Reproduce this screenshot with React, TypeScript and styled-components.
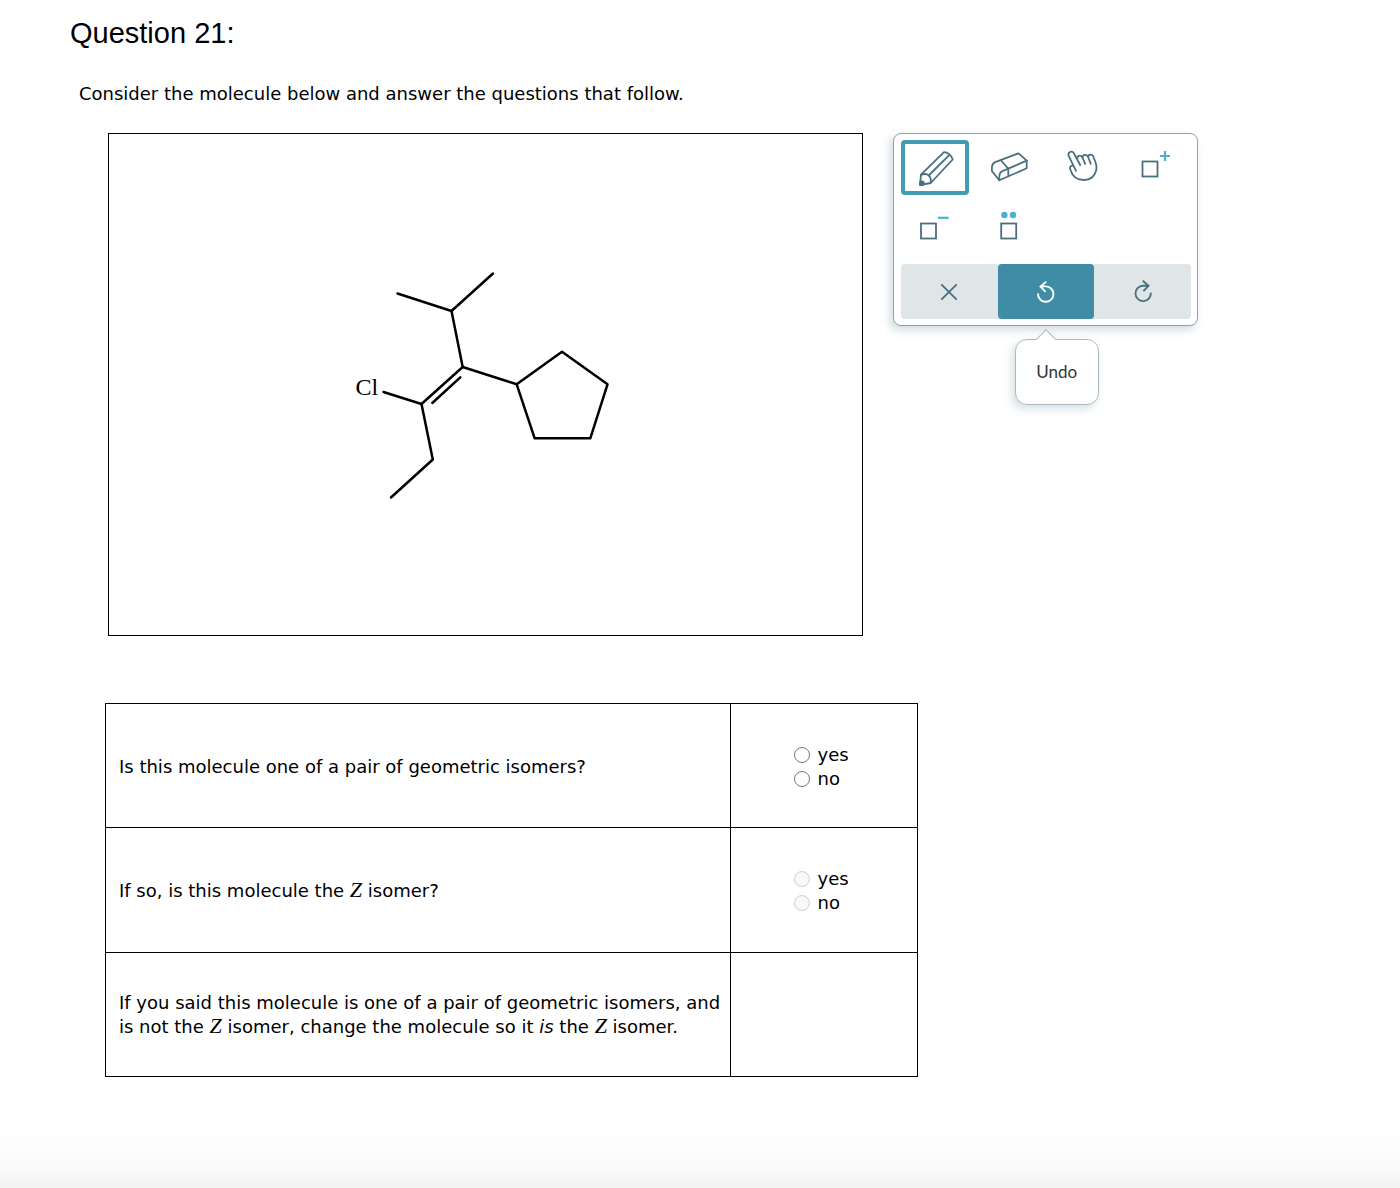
import React, { useState } from "react";
import styled, { createGlobalStyle } from "styled-components";

const ink = "#4a707e";
const accent = "#4fb0cb";

const GlobalStyle = createGlobalStyle`
  *, *::before, *::after { box-sizing: border-box; }
  body {
    margin: 0;
    background: #fff;
    color: #000;
    font-family: Verdana, "DejaVu Sans", sans-serif;
    font-size: 18px;
    line-height: 24px;
  }
`;

const Page = styled.main`
  min-height: 100vh;
  padding: 16px 70px 110px;
  background: linear-gradient(to top, #f3f3f3, #fafafa 20px, #ffffff 60px);
`;

const Title = styled.h1`
  margin: 0;
  font: 400 29px/34px "Liberation Sans", Arial, sans-serif;
`;

const Prompt = styled.p`
  margin: 32px 0 27px 9px;
`;

const Workspace = styled.section`
  display: flex;
  align-items: flex-start;
  gap: 30px;
  margin-left: 38px;
`;

const Canvas = styled.div`
  flex: 0 1 755px;
  border: 1px solid #000;
`;

const Drawing = styled.svg`
  display: block;
  width: 100%;
  height: auto;
`;

const AtomLabel = styled.text`
  font: 24px "Liberation Serif", "Times New Roman", serif;
  fill: #000;
  stroke: none;
`;

const Toolbox = styled.aside`
  flex: 0 0 305px;
  padding: 6px 6px 6px 7px;
  border: 1px solid #8aa3ad;
  border-radius: 8px;
  background: #fff;
  box-shadow: -3px 4px 8px rgba(74, 112, 126, 0.25);
`;

const ToolGrid = styled.div`
  display: grid;
  grid-template-columns: repeat(4, 1fr);
  grid-auto-rows: 55px;
  gap: 6px;
`;

const ToolButton = styled.button<{ $active: boolean }>`
  display: flex;
  align-items: center;
  justify-content: center;
  padding: 0;
  border: 4px solid ${(p) => (p.$active ? "#429bb3" : "transparent")};
  border-radius: 4px;
  background: none;
  cursor: pointer;
`;

const ToolIcon = styled.svg`
  flex: none;
  width: 60px;
  height: 47px;
  fill: none;
  stroke: ${ink};
  stroke-width: 1.8;
  stroke-linejoin: round;
  stroke-linecap: round;
`;

const ActionBar = styled.div`
  display: grid;
  grid-template-columns: repeat(3, 1fr);
  margin-top: 8px;
  border-radius: 4px;
  background: #e0e6e8;
`;

const ActionSlot = styled.div`
  position: relative;
`;

const ActionButton = styled.button<{ $primary?: boolean }>`
  display: flex;
  align-items: center;
  justify-content: center;
  width: 100%;
  height: 55px;
  padding: 0;
  border: 0;
  border-radius: 4px;
  background: ${(p) => (p.$primary ? "#3f8ca6" : "transparent")};
  color: ${(p) => (p.$primary ? "#fff" : ink)};
  cursor: pointer;
`;

const ActionIcon = styled.svg`
  width: 24px;
  height: 24px;
  fill: none;
  stroke: currentColor;
  stroke-width: 1.9;
`;

const Tooltip = styled.div`
  position: absolute;
  top: 75px;
  left: 17px;
  width: 84px;
  padding: 20px 0;
  border: 1px solid #a9bac1;
  border-radius: 12px;
  background: #fff;
  box-shadow: -3px 4px 8px rgba(74, 112, 126, 0.22);
  color: #333;
  font: 17px/24px Lato, sans-serif;
  text-align: center;

  &::before {
    content: "";
    position: absolute;
    top: -8px;
    left: 23px;
    width: 14px;
    height: 14px;
    border: solid #a9bac1;
    border-width: 1px 0 0 1px;
    background: #fff;
    transform: rotate(45deg);
  }
`;

const QuestionTable = styled.table`
  width: 100%;
  max-width: 813px;
  height: 374px;
  margin: 67px 0 0 35px;
  border-collapse: collapse;
`;

const Row = styled.tr`
  height: 124px;
`;

const QuestionCell = styled.th`
  width: 77%;
  padding: 2px 4px 0 13px;
  border: 1px solid #000;
  font-weight: 400;
  text-align: left;
`;

const AnswerCell = styled.td`
  padding: 2px 6px 0 0;
  border: 1px solid #000;
`;

const Choices = styled.div`
  display: flex;
  flex-direction: column;
  width: max-content;
  margin: 0 auto;
`;

const Choice = styled.label`
  display: flex;
  align-items: center;
  gap: 8px;
`;

const Radio = styled.input`
  width: 16px;
  height: 16px;
  margin: 0;
`;

const Symbol = styled.i`
  font: italic 22px/20px "Liberation Serif", "Times New Roman", serif;
`;

function Molecule() {
  return (
    <Drawing viewBox="0 0 753 501" role="img" aria-label="Skeletal structure">
      <g fill="none" stroke="#000" strokeWidth="2.5" strokeLinejoin="round" strokeLinecap="round">
        <path d="M288.5 159.5 342.5 177 384 139.5" />
        <path d="M342.5 177 353.7 233 312.5 270 274.5 258" />
        <path d="M351.3 243.3 323.3 269" />
        <path d="M312.5 270 323.8 325.5 282 363.5" />
        <path d="M353.7 233 407.7 250.3 453 217.7 498.5 250.3 481.3 304.3H425.7L407.7 250.3" />
        <AtomLabel x="246.5" y="261">Cl</AtomLabel>
      </g>
    </Drawing>
  );
}

const tools = [
  {
    name: "Draw",
    art: (
      <>
        <path d="M15 41 16 30.7 39 8.2C42.5 8.2 47 11.5 47.7 15.5L25.7 39Z" />
        <path d="M16 30.7C19.5 29.6 22.3 29.9 23.7 31.5 25.6 33 26.2 36 25.7 39M23.7 31.5 44.2 11.2" />
        <circle cx="16.9" cy="39.2" r="1.9" fill={ink} />
      </>
    ),
  },
  {
    name: "Erase",
    art: (
      <>
        <path d="M12.9 27V23.5C13 21 14.2 19 16.2 18.2L39.7 9.3 47.7 16.7V24.3L20.3 36.3Z" />
        <path d="M20.3 36.3V32.5C20.4 29.5 21.5 27.7 24 26.8L47.7 16.7M22 16.5 29.3 24.7V32" />
      </>
    ),
  },
  {
    name: "Move",
    art: (
      <path d="M23 26.8 15.8 12.2C14.2 8.5 18.7 5.7 21 9.5L27.2 21M24.3 14.5C24.4 11.2 28 10.7 29.5 13.5L32.2 19.8M29.7 13.5C29.8 10.2 33.5 10 35 12.8L37.7 19.8M35.2 13C35.3 10.2 39 9.8 40.2 12.2L42.6 18.5C45.5 27 40.5 36 31 36 23.5 36 19.3 32 17.7 26.5 16.4 23.5 16.5 22 19.8 21.3" />
    ),
  },
  {
    name: "Add positive charge",
    art: (
      <>
        <rect x="15.5" y="17.5" width="15" height="15" strokeLinejoin="miter" />
        <path d="M33 12H43M38 7V17" stroke={accent} strokeWidth="2.2" strokeLinecap="butt" />
      </>
    ),
  },
  {
    name: "Add negative charge",
    art: (
      <>
        <rect x="16" y="18.5" width="15" height="15" strokeLinejoin="miter" />
        <path d="M33 12.8H43.6" stroke={accent} strokeWidth="2.2" strokeLinecap="butt" />
      </>
    ),
  },
  {
    name: "Add lone pair",
    art: (
      <>
        <rect x="22.2" y="18.5" width="15" height="15" strokeLinejoin="miter" />
        <g fill={accent} stroke="none">
          <circle cx="25.4" cy="10" r="3.2" />
          <circle cx="34" cy="10" r="3.2" />
        </g>
      </>
    ),
  },
];

function YesNo({ name, disabled }: { name: string; disabled?: boolean }) {
  return (
    <Choices role="radiogroup">
      {["yes", "no"].map((value) => (
        <Choice key={value}>
          <Radio type="radio" name={name} value={value} disabled={disabled} />
          {value}
        </Choice>
      ))}
    </Choices>
  );
}

export default function App() {
  const [tool, setTool] = useState("Draw");

  return (
    <>
      <GlobalStyle />
      <Page>
        <Title>Question 21:</Title>
        <Prompt>Consider the molecule below and answer the questions that follow.</Prompt>
        <Workspace>
          <Canvas>
            <Molecule />
          </Canvas>
          <Toolbox>
            <ToolGrid>
              {tools.map(({ name, art }) => (
                <ToolButton key={name} type="button" aria-label={name} $active={tool === name} onClick={() => setTool(name)}>
                  <ToolIcon viewBox="0 0 60 47">{art}</ToolIcon>
                </ToolButton>
              ))}
            </ToolGrid>
            <ActionBar>
              <ActionButton type="button" aria-label="Clear">
                <ActionIcon viewBox="0 0 24 24">
                  <path d="M4.3 4.3 19.7 19.7M19.7 4.3 4.3 19.7" />
                </ActionIcon>
              </ActionButton>
              <ActionSlot>
                <ActionButton type="button" aria-labelledby="undo-tip" $primary>
                  <ActionIcon viewBox="0 0 24 24">
                    <path d="M4.1 13.3A7.7 7.7 0 1 0 11.8 6.4H6.7M12.2 1.6 6.5 6.6 11.6 11.8" />
                  </ActionIcon>
                </ActionButton>
                <Tooltip id="undo-tip" role="tooltip">Undo</Tooltip>
              </ActionSlot>
              <ActionButton type="button" aria-label="Redo">
                <ActionIcon viewBox="0 0 24 24">
                  <path d="M19.8 12.6A7.7 7.7 0 1 1 12.1 5.7H17.2M11.8 .8 17.5 5.9 12.4 11.1" />
                </ActionIcon>
              </ActionButton>
            </ActionBar>
          </Toolbox>
        </Workspace>
        <QuestionTable>
          <tbody>
            <Row>
              <QuestionCell scope="row">Is this molecule one of a pair of geometric isomers?</QuestionCell>
              <AnswerCell>
                <YesNo name="geometric" />
              </AnswerCell>
            </Row>
            <Row>
              <QuestionCell scope="row">
                If so, is this molecule the <Symbol>Z</Symbol> isomer?
              </QuestionCell>
              <AnswerCell>
                <YesNo name="z-isomer" disabled />
              </AnswerCell>
            </Row>
            <Row>
              <QuestionCell scope="row">
                If you said this molecule is one of a pair of geometric isomers, and is not the{" "}
                <Symbol>Z</Symbol> isomer, change the molecule so it <em>is</em> the <Symbol>Z</Symbol> isomer.
              </QuestionCell>
              <AnswerCell />
            </Row>
          </tbody>
        </QuestionTable>
      </Page>
    </>
  );
}
